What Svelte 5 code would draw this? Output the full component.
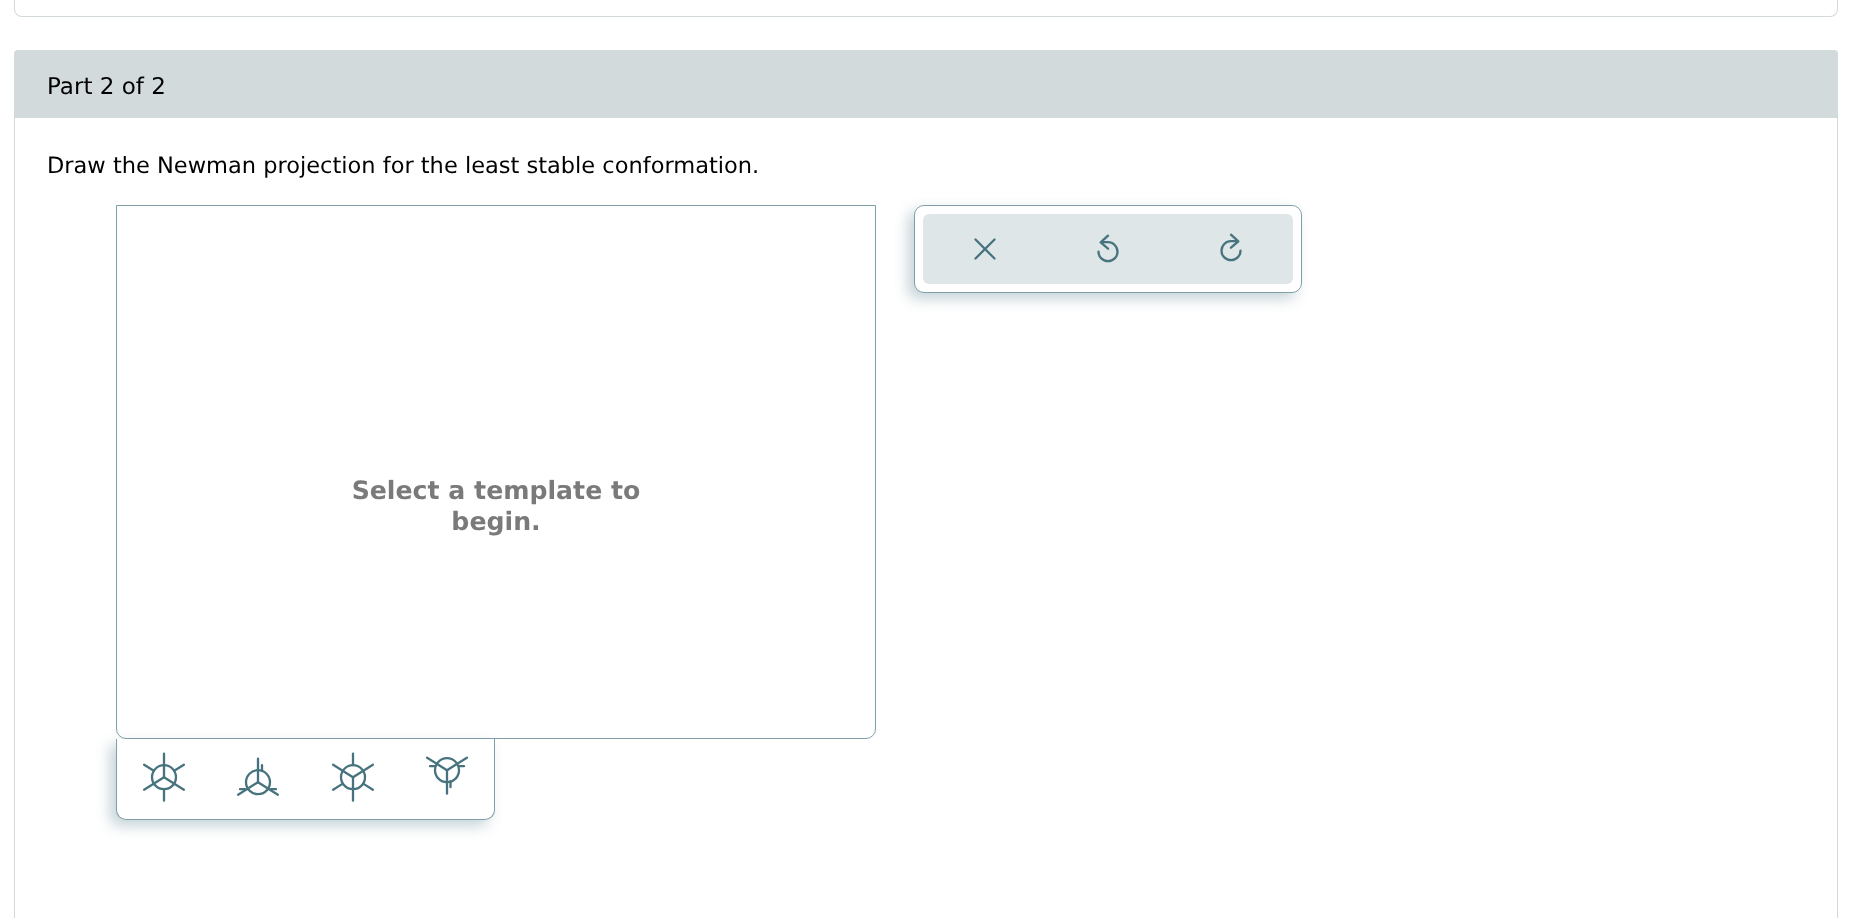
<script lang="ts">
  const r = Math.PI / 180;
  const pt = (cx: number, cy: number, deg: number, len: number) => [
    cx + Math.sin(deg * r) * len,
    cy - Math.cos(deg * r) * len
  ];

  // front bonds run from the centre, back bonds start on the ring
  function bond(cx: number, cy: number, deg: number, from: number, to: number) {
    const [x1, y1] = pt(cx, cy, deg, from);
    const [x2, y2] = pt(cx, cy, deg, to);
    return `M${x1.toFixed(1)} ${y1.toFixed(1)}L${x2.toFixed(1)} ${y2.toFixed(1)}`;
  }

  const templates = [
    { label: 'Staggered, front bond up', cy: 28.2, front: [0, 122, 238], back: [58, 180, 302], stubs: [] },
    { label: 'Eclipsed, front bond up', cy: 33.2, front: [0, 122, 238], back: [], stubs: [[4, -11, 4, -17], [13, 7, 18, 7], [-13, 7, -18, 7]] },
    { label: 'Staggered, front bond down', cy: 28.2, front: [58, 180, 302], back: [0, 122, 238], stubs: [] },
    { label: 'Eclipsed, front bond down', cy: 21.2, front: [58, 180, 302], back: [], stubs: [[-12, -4, -17, -4], [12, -4, 17, -4], [3.5, 11, 3.5, 17]] }
  ];
</script>

<div class="page">
  <div class="prev-card"></div>

  <section class="part">
    <header class="part-head">Part 2 of 2</header>
    <div class="part-body">
      <p class="prompt">Draw the Newman projection for the least stable conformation.</p>

      <div class="workspace">
        <div class="left">
          <div class="canvas">
            <span class="hint">Select a template to<br />begin.</span>
          </div>
          <div class="templates">
            {#each templates as t}
              <button class="tpl" aria-label={t.label}>
                <svg width="60" height="60" viewBox="0 0 60 60" fill="none" stroke="#47737f" stroke-width="2.3" stroke-linecap="round">
                  <circle cx="30" cy={t.cy} r="12" />
                  {#each t.front as d}
                    <path d={bond(30, t.cy, d, 0, 23.5)} />
                  {/each}
                  {#each t.back as d}
                    <path d={bond(30, t.cy, d, 12, 23.5)} />
                  {/each}
                  {#each t.stubs as s}
                    <path d={`M${30 + s[0]} ${t.cy + s[1]}L${30 + s[2]} ${t.cy + s[3]}`} />
                  {/each}
                </svg>
              </button>
            {/each}
          </div>
        </div>

        <div class="tools">
          <div class="tools-inner">
            <button class="tool" aria-label="Clear">
              <svg width="40" height="40" viewBox="-20 -20 40 40" fill="none" stroke="#47737f" stroke-width="2.3" stroke-linecap="round">
                <path d="M-9.5 -9.5L9.5 9.5M9.5 -9.5L-9.5 9.5" />
              </svg>
            </button>
            <button class="tool" aria-label="Undo">
              <svg width="40" height="40" viewBox="-20 -22.7 40 40" fill="none" stroke="#47737f" stroke-width="2.3" stroke-linecap="round" stroke-linejoin="round">
                <path d="M-9.5 0A9.5 9.5 0 1 0 0 -9.5H-7M0 -16L-7.3 -9.3L0 -3" />
              </svg>
            </button>
            <button class="tool" aria-label="Redo">
              <svg width="40" height="40" viewBox="-20 -21.7 40 40" fill="none" stroke="#47737f" stroke-width="2.3" stroke-linecap="round" stroke-linejoin="round">
                <path d="M9.5 0A9.5 9.5 0 1 1 0 -9.5H7M0 -16L7.3 -9.3L0 -3" />
              </svg>
            </button>
          </div>
        </div>
      </div>
    </div>
  </section>
</div>

<style>
  :global(body) {
    margin: 0;
    background: #fff;
  }

  .page {
    height: 918px;
    overflow: hidden;
    padding: 0 12px 0 14px;
    box-sizing: border-box;
    font-family: "DejaVu Sans", sans-serif;
    text-rendering: geometricPrecision;
    will-change: transform;
    color: #000;
  }

  .prev-card {
    height: 17px;
    box-sizing: border-box;
    border: 1px solid #d2dadc;
    border-top: none;
    border-radius: 0 0 8px 8px;
    margin-bottom: 33px;
  }

  .part {
    border: 1px solid #d2dadc;
    border-top: none;
    border-radius: 6px 6px 0 0;
    height: 900px;
  }

  .part-head {
    height: 68px;
    margin: 0 -1px;
    padding: 5px 0 0 33px;
    box-sizing: border-box;
    background: #d2dadc;
    border-radius: 4px 4px 0 0;
    display: flex;
    align-items: center;
    font-size: 23px;
  }

  .part-body {
    padding: 35px 32px 0;
  }

  .prompt {
    margin: 0 0 25px;
    font-size: 22.5px;
    line-height: 27px;
  }

  .workspace {
    display: flex;
    align-items: flex-start;
    gap: 38px;
    padding-left: 69px;
  }

  .left {
    width: 760px;
  }

  .canvas {
    box-sizing: border-box;
    height: 534px;
    border: 1px solid #7f9fa9;
    border-radius: 0 0 10px 10px;
    display: flex;
    align-items: center;
    justify-content: center;
    padding-top: 67px;
  }

  .hint {
    font-size: 25.2px;
    line-height: 31px;
    font-weight: 700;
    color: #7a7a7a;
    text-align: center;
  }

  .templates {
    box-sizing: border-box;
    width: 379px;
    height: 81px;
    border: 1px solid #7f9fa9;
    border-top: none;
    border-radius: 0 0 10px 10px;
    display: flex;
    background: #fff;
    box-shadow: -6px 6px 14px rgba(65, 110, 125, 0.3);
  }

  .tpl,
  .tool {
    flex: 1;
    padding: 0;
    border: none;
    background: none;
    display: flex;
    align-items: center;
    justify-content: center;
    cursor: pointer;
  }

  .tools {
    box-sizing: border-box;
    width: 388px;
    height: 88px;
    padding: 8px;
    border: 1px solid #7f9fa9;
    border-radius: 10px;
    background: #fff;
    box-shadow: -6px 6px 14px rgba(65, 110, 125, 0.3);
  }

  .tools-inner {
    height: 100%;
    display: flex;
    background: #dfe6e8;
    border-radius: 6px;
  }
</style>
